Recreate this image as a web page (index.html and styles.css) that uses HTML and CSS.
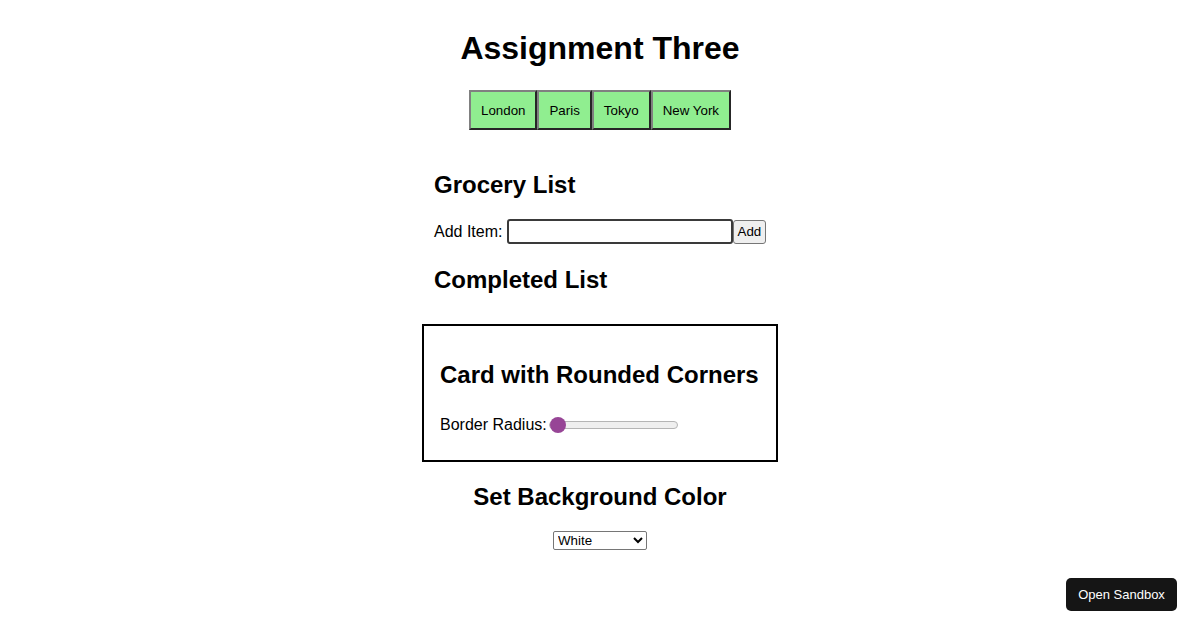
FILE: index.html
```html
<!DOCTYPE html>
<html lang="en">
<head>
<meta charset="utf-8">
<title>Assignment Three</title>
<link rel="stylesheet" href="styles.css">
</head>
<body>
<div class="app">
  <h1 class="title">Assignment Three</h1>
  <div class="cities"><button class="city">London</button><button class="city">Paris</button><button class="city">Tokyo</button><button class="city">New York</button></div>

  <section class="grocery">
    <h2 class="heading">Grocery List</h2>
    <div class="add-row"><label class="add-label" for="item">Add Item: </label><input id="item" class="add-input" type="text"><button class="add-btn">Add</button></div>
    <h2 class="heading">Completed List</h2>
    <ul class="done-list"></ul>
  </section>

  <div class="card">
    <h2 class="heading">Card with Rounded Corners</h2>
    <div class="radius-row"><label class="radius-label" for="radius">Border Radius:</label><input id="radius" class="radius-range" type="range" min="0" max="50" value="0"></div>
  </div>

  <section class="bg-section">
    <h2 class="heading">Set Background Color</h2>
    <select class="bg-select">
      <option>White</option>
      <option>Light Blue</option>
      <option>Light Green</option>
    </select>
  </section>
</div>
<button class="sandbox">Open Sandbox</button>
</body>
</html>
```

FILE: styles.css
```css
body {
  margin: 8px;
  font-family: "Liberation Sans", Arial, sans-serif;
  color: #000;
  background: #fff;
}

.app {
  text-align: center;
}

.title {
  font-size: 32px;
  margin: 22.4px 0 23px;
}

.cities {
  display: flex;
  justify-content: center;
}

.city {
  box-sizing: border-box;
  font-family: "Liberation Sans", Arial, sans-serif;
  font-size: 13.33px;
  background-color: lightgreen;
  padding: 10px;
  margin: 0;
  height: 40px;
  color: #000;
  border-style: solid;
  border-width: 2px;
  border-color: #808080 #262626 #262626 #808080;
}

.grocery {
  width: 332px;
  margin: 0 auto;
  padding-top: 21px;
  text-align: left;
}

.heading {
  font-size: 24px;
  margin: 19.92px 0;
}

.add-row {
  font-size: 16px;
  height: 25px;
  padding-bottom: 2px;
  display: flex;
  align-items: center;
}

.add-label {
  white-space: pre;
}

.add-input {
  box-sizing: border-box;
  width: 226px;
  height: 25px;
  margin: 0;
  border: 2px solid #3a3a3a;
  border-radius: 3px;
  padding: 1px 2px;
  font-family: "Liberation Sans", Arial, sans-serif;
  font-size: 13.33px;
}

.add-btn {
  box-sizing: border-box;
  height: 24px;
  width: 33px;
  margin: 0;
  padding: 1px 2px;
  font-family: "Liberation Sans", Arial, sans-serif;
  font-size: 13.33px;
  color: #000;
  background: #efefef;
  border: 1px solid #767676;
  border-radius: 3px;
}

.done-list {
  margin: 16px 0;
  padding: 0;
}

.card {
  box-sizing: border-box;
  width: 356px;
  margin: 30px auto 21px;
  border: 2px solid #000;
  padding: 15px 16px 20px;
  text-align: left;
}

.radius-row {
  display: flex;
  align-items: center;
  height: 29px;
  padding-top: 2px;
  font-size: 16px;
  gap: 2px;
}

.radius-range {
  -webkit-appearance: none;
  appearance: none;
  width: 129px;
  height: 16px;
  margin: 0;
  background: transparent;
}

.radius-range::-webkit-slider-runnable-track {
  height: 8px;
  background: #efefef;
  border: 1px solid #b5b5b5;
  border-radius: 5px;
}

.radius-range::-webkit-slider-thumb {
  -webkit-appearance: none;
  appearance: none;
  width: 16px;
  height: 16px;
  border-radius: 50%;
  background: #974596;
  border: none;
  margin-top: -5px;
}

.bg-section {
  text-align: center;
}

.bg-select {
  width: 94px;
  height: 19px;
  font-family: "Liberation Sans", Arial, sans-serif;
  font-size: 13.33px;
  color: #000;
  background: #fff;
  border: 1px solid #767676;
  border-radius: 2px;
}

.sandbox {
  position: fixed;
  right: 23px;
  bottom: 19px;
  width: 111px;
  height: 33px;
  background: #151515;
  color: #fff;
  border: none;
  border-radius: 5px;
  font-family: "Liberation Sans", Arial, sans-serif;
  font-size: 13px;
  padding: 0;
}
```
